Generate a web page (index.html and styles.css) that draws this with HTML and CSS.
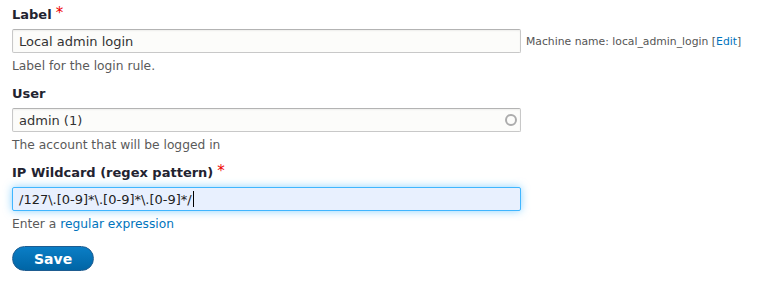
FILE: index.html
```html
<!DOCTYPE html>
<html>
<head>
<meta charset="utf-8">
<link rel="stylesheet" href="styles.css">
</head>
<body>
<form class="form">
  <div class="form-item">
    <label class="label">Label<span class="req">*</span></label>
    <div class="row">
      <input class="text" type="text" value="Local admin login">
      <span class="machine">Machine name: local_admin_login <span class="bracket">[</span><a class="link" href="#">Edit</a><span class="bracket">]</span></span>
    </div>
    <div class="description">Label for the login rule.</div>
  </div>
  <div class="form-item">
    <label class="label">User</label>
    <div class="row">
      <div class="auto-wrap">
        <input class="text" type="text" value="admin (1)">
        <span class="throbber"></span>
      </div>
    </div>
    <div class="description">The account that will be logged in</div>
  </div>
  <div class="form-item">
    <label class="label">IP Wildcard (regex pattern)<span class="req">*</span></label>
    <div class="row">
      <div class="focus-input"><span class="val">/127\.[0-9]*\.[0-9]*\.[0-9]*/</span><span class="caret"></span></div>
    </div>
    <div class="description">Enter a <a class="link" href="#">regular expression</a></div>
  </div>
  <div class="actions">
    <button class="button" type="button">Save</button>
  </div>
</form>
</body>
</html>
```
FILE: styles.css
```css
html, body {
  margin: 0;
  padding: 0;
  background: #fff;
}
body {
  font-family: "DejaVu Sans", Verdana, sans-serif;
  font-size: 13px;
  color: #222330;
}
.form {
  padding: 6px 12px 0 12px;
}
.form-item {
  margin-bottom: 10px;
}
.label {
  display: block;
  font-weight: bold;
  color: #222330;
  line-height: 18px;
  margin-bottom: 5px;
}
.req {
  color: #e00;
  font-weight: normal;
  font-size: 15px;
  margin-left: 4px;
  vertical-align: top;
  line-height: 14px;
}
.row {
  display: flex;
  align-items: center;
}
.text, .focus-input {
  box-sizing: border-box;
  width: 509px;
  height: 24px;
  margin: 0;
  padding: 0 6px;
  font-family: "DejaVu Sans", Verdana, sans-serif;
  font-size: 13px;
  color: #333;
  background: #fcfcfa;
  border: 1px solid #c8c8c8;
  border-top-color: #b3b3b3;
  border-radius: 2px;
  box-shadow: inset 0 1px 2px rgba(0,0,0,0.06);
  outline: none;
}
.focus-input {
  display: flex;
  align-items: center;
  background: #e8f0fe;
  border-color: #40b6ff;
  box-shadow: 0 0 8px rgba(64,182,255,0.6);
  color: #222;
}
.caret {
  display: inline-block;
  width: 1px;
  height: 16px;
  background: #000;
  margin-left: 1px;
}
.auto-wrap {
  position: relative;
  width: 509px;
  height: 24px;
}
.throbber {
  position: absolute;
  right: 4px;
  top: 6px;
  width: 8px;
  height: 8px;
  border: 2px solid #acacac;
  border-radius: 50%;
}
.machine {
  margin-left: 5px;
  font-size: 10.8px;
  color: #555;
  white-space: nowrap;
}
.link {
  color: #0074bd;
  text-decoration: none;
}
.description {
  margin-top: 4px;
  font-size: 12.25px;
  color: #5a5a5a;
  line-height: 18px;
}
.actions {
  padding-top: 3px;
}
.button {
  box-sizing: border-box;
  height: 25px;
  padding: 0 21px;
  font-family: "DejaVu Sans", Verdana, sans-serif;
  font-size: 14px;
  font-weight: bold;
  color: #fff;
  background: linear-gradient(#0a7ec6, #0065a5);
  border: 1px solid #1e5c90;
  border-radius: 20em;
  cursor: pointer;
}
```
